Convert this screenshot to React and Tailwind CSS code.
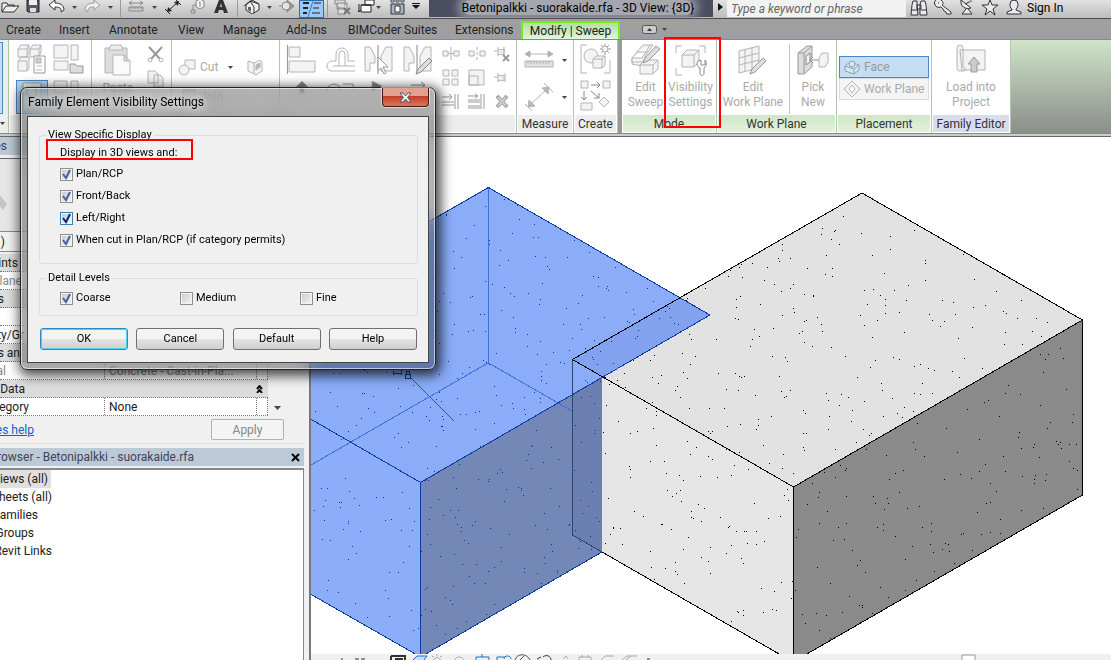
import React, { useState } from "react";

const seeded = (seed) => () => {
  seed = (seed * 16807) % 2147483647;
  return seed / 2147483647;
};

/* Concrete stipple: one pixel marks scattered over the whole scene */
const stipple = (seed, count) => {
  const rand = seeded(seed);
  let d = "";
  for (let i = 0; i < count; i++) {
    const x = 311 + Math.floor(rand() * 775);
    const y = 185 + Math.floor(rand() * 470);
    d += `M${x} ${y}h1v1h-1z`;
  }
  return d;
};

const Art = ({ w, h, className = "", children }) => (
  <svg
    width={w}
    height={h}
    viewBox={`0 0 ${w} ${h}`}
    fill="#f3f3f3"
    stroke="#b4b4b4"
    strokeLinejoin="round"
    className={`shrink-0 ${className}`}
    aria-hidden="true"
  >
    {children}
  </svg>
);

const Caret = ({ className = "" }) => (
  <svg width="5" height="3" viewBox="0 0 5 3" className={`shrink-0 ${className}`} aria-hidden="true">
    <path d="M0 0h5L2.500 3z" fill="#444" />
  </svg>
);

const quickTools = [
  {
    name: "Open",
    width: "w-[20px]",
    art: <path d="M1 12V3h5l1 2h6v2M1 12l4-6h13l-5 6z" fill="#eee" stroke="#333" />,
  },
  {
    name: "Save",
    width: "w-[26px]",
    art: (
      <>
        <path d="M3 0h12v12H4l-1-1z" fill="#555b66" stroke="#222" />
        <path d="M5 0h8v5H5z" fill="#eee" stroke="none" />
        <path d="M6 8h6v4H6z" fill="#ddd" stroke="none" />
      </>
    ),
  },
  {
    name: "Undo",
    width: "w-[22px]",
    art: <path d="M1 5l6-5v3c5 0 9 2 9 7l-3 2c1-4-2-5-6-5v3z" fill="#fff" stroke="#333" />,
  },
  { name: "Undo list", width: "w-[12px]" },
  {
    name: "Redo",
    width: "w-[24px]",
    art: <path d="M17 5l-6-5v3c-5 0-9 2-9 7l3 2c-1-4 2-5 6-5v3z" fill="#eee" stroke="#999" />,
  },
  { name: "Redo list", width: "w-[12px]" },
  { sep: true, width: "w-[8px]" },
  {
    name: "Measure",
    width: "w-[24px]",
    art: (
      <>
        <path d="M2 3h14M5 1L2 3l3 2M13 1l3 2-3 2" fill="none" stroke="#888" />
        <path d="M2 7h14v4H2zM5 7v2M8 7v2M11 7v2M14 7v2" stroke="#888" fill="#ccc" />
      </>
    ),
  },
  { name: "Measure list", width: "w-[12px]" },
  {
    name: "Aligned dimension",
    width: "w-[25px]",
    art: (
      <>
        <path d="M4 11L14 2M1 9l5 5M12 0l5 5" fill="none" stroke="#222" />
        <path d="M3 12l1-5 4 4zM15 1l-1 5-4-4z" fill="#222" stroke="none" />
      </>
    ),
  },
  {
    name: "Tag",
    width: "w-[24px]",
    art: (
      <>
        <path d="M8 1l4-2 4 2v6l-4 2-4-2z" fill="#eee" stroke="#888" />
        <path d="M8 5H5v5M3 10h4v3H3zM12 2v5M11 3l1-1" fill="none" stroke="#888" />
      </>
    ),
  },
  {
    name: "Text",
    width: "w-[24px]",
    art: <path d="M2 13L7 0h4l5 13h-4l-1-3H7l-1 3zM8 7h2L9 3z" fill="#333" stroke="none" />,
  },
  { sep: true, width: "w-[8px]" },
  {
    name: "Default 3D view",
    width: "w-[22px]",
    art: (
      <>
        <path d="M3 5l6-5 7 4v6l-7 4-6-4z" fill="#eee" stroke="#333" />
        <path d="M1 6l6-5 9 3M7 1l4 6v6" fill="none" stroke="#333" />
        <path d="M5 7h3v5l-3-2z" fill="#5b6470" stroke="none" />
      </>
    ),
  },
  { name: "View list", width: "w-[12px]" },
  {
    name: "Section",
    width: "w-[24px]",
    art: (
      <>
        <path d="M9 0l7 6-7 6z" fill="#999" stroke="#888" />
        <circle cx="8" cy="6" r="4" fill="#e4e4e4" stroke="#888" />
        <path d="M1 6h3" stroke="#888" />
      </>
    ),
  },
];

const QuickButton = ({ tool }) =>
  tool.sep ? (
    <span className={`${tool.width} flex h-[17px] shrink-0 justify-center`}>
      <span className="w-px bg-[#9a9a9a]" />
    </span>
  ) : (
    <button aria-label={tool.name} className={`${tool.width} flex h-[17px] shrink-0 items-start justify-center`}>
      {tool.art ? (
        <Art w={18} h={14}>
          {tool.art}
        </Art>
      ) : (
        <Caret className="mt-[6px]" />
      )}
    </button>
  );

const TopBar = () => (
  <header className="flex h-[19px] shrink-0 items-start overflow-hidden border-b border-[#4d4d4d] bg-linear-to-b from-[#e2e2e2] to-[#bcbcbc] text-[12px]">
    {quickTools.map((tool, i) => (
      <QuickButton key={i} tool={tool} />
    ))}
    <button aria-label="Thin lines" className="h-[18px] w-[25px] shrink-0 border border-[#2a6ebb] bg-[#9cc8f5]">
      <Art w={23} h={16}>
        <path d="M3 2h6M3 7h5M3 12h4" stroke="#222" strokeWidth="2" />
        <path d="M14 2h7M13 7h6M12 12h8" stroke="#222" />
        <path d="M13 0L8 16" stroke="#2a7de0" />
      </Art>
    </button>
    <span className="ml-[3px] h-[17px] w-px shrink-0 bg-[#9a9a9a]" />
    <button aria-label="Close hidden windows" className="ml-[6px] shrink-0">
      <Art w={20} h={16}>
        <path d="M1 0h10v6M4 4H1V0M3 3h10v6H3zM5 7H3M6 8h5v6H4V8z" fill="#ddd" stroke="#888" />
        <path d="M10 8l6 6M16 8l-6 6" stroke="#777" strokeWidth="2" />
      </Art>
    </button>
    <button aria-label="Switch windows" className="ml-[4px] flex w-[30px] shrink-0 items-start">
      <Art w={18} h={15}>
        <path d="M7 0h9v5H7zM3 5h10v7H3z" fill="#fff" stroke="#222" />
        <path d="M3 5h10M1 4v8M0 10l1 2 2-2" stroke="#222" fill="none" />
      </Art>
      <Caret className="mt-[6px]" />
    </button>
    <button aria-label="User interface" className="shrink-0">
      <Art w={18} h={16}>
        <path d="M3 0h3v2H3zM8 0h3v2H8zM13 0h3v2h-3z" fill="#fff" stroke="#444" />
        <path d="M3 4h13v10H3z" fill="#a8b4c4" stroke="#333" />
        <path d="M7 6h5v6H7z" fill="#fff" stroke="#333" />
      </Art>
    </button>
    <button aria-label="Customize toolbar" className="ml-[6px] w-[17px] shrink-0">
      <svg width="8" height="9" viewBox="0 0 8 9" aria-hidden="true">
        <path d="M0 3h8v1H0zM0 5h8L4 9z" fill="#111" />
      </svg>
    </button>
    <div className="h-[17px] w-[284px] shrink-0 bg-[#4b4d60] pr-[20px] pl-[34px]">
      <div className="flex h-[15px] items-center justify-center rounded-full bg-[#a5a6b0] whitespace-nowrap text-black shadow-[0_0_8px_6px_#8d8e9b]">
        Betonipalkki - suorakaide.rfa - 3D View: {"{3D}"}
      </div>
    </div>
    <button aria-label="Expand search" className="flex h-[17px] w-[14px] shrink-0 items-start justify-center pt-[3px]">
      <svg width="5" height="8" viewBox="0 0 5 8" aria-hidden="true">
        <path d="M0 0l5 4-5 4z" fill="#111" />
      </svg>
    </button>
    <input
      aria-label="Search"
      placeholder="Type a keyword or phrase"
      className="h-[17px] w-[179px] shrink-0 bg-[#f2f2f2] pl-[4px] text-[12px] italic outline-none placeholder:text-[#666]"
    />
    <button aria-label="Find" className="ml-[4px] shrink-0">
      <Art w={20} h={16}>
        <path d="M3 1h4v4l1 10H1L2 5zM11 1h4l1 4 1 10h-7V5zM7 5h4v4H7z" fill="#e8ebf2" stroke="#333" />
        <path d="M2 10h5M11 10h5" stroke="#333" />
      </Art>
    </button>
    <button aria-label="Subscription" className="ml-[3px] shrink-0">
      <Art w={22} h={16}>
        <path d="M2 5a4 4 0 0 1 7-4c2 2 1 3 0 4l9 7v2h-4l-1-2-2-1-1-2-2-2c-3 1-5 0-6-2zM5 3h1" fill="#e8ebf2" stroke="#333" />
      </Art>
    </button>
    <button aria-label="Communication" className="ml-[3px] shrink-0">
      <Art w={20} h={16}>
        <path d="M3 0c-1 6 4 10 10 8zM7 4l6-3M8 9l-4 5h10l-4-5" fill="#e8ebf2" stroke="#333" />
        <circle cx="13" cy="1" r="1" fill="#333" />
      </Art>
    </button>
    <button aria-label="Favorites" className="ml-[2px] shrink-0">
      <Art w={20} h={16}>
        <path d="M10 0l2 5h6l-5 4 2 6-5-4-5 4 2-6-5-4h6z" fill="#e8ebf2" stroke="#333" />
      </Art>
    </button>
    <button className="ml-[4px] flex shrink-0 items-start whitespace-nowrap text-black">
      <Art w={20} h={16}>
        <path d="M6 4a4 4 0 0 1 8 0c0 3-1 4-2 5v1l5 2v2H3v-2l5-2V9C6 8 6 6 6 4z" fill="#e8ebf2" stroke="#333" />
      </Art>
      <span className="ml-[3px] leading-[16px]">Sign In</span>
    </button>
  </header>
);

const tabs = [
  ["Create", "w-[53px]"],
  ["Insert", "w-[50px]"],
  ["Annotate", "w-[69px]"],
  ["View", "w-[45px]"],
  ["Manage", "w-[63px]"],
  ["Add-Ins", "w-[62px]"],
  ["BIMCoder Suites", "w-[107px]"],
  ["Extensions", "w-[66px]"],
];

const TabRow = () => (
  <nav className="flex h-[20px] shrink-0 items-end bg-[#9f9f9f] pl-[6px] text-[12px] leading-[18px] text-[#222]">
    {tabs.map(([label, width]) => (
      <button key={label} className={`${width} shrink-0 text-left whitespace-nowrap`}>
        {label}
      </button>
    ))}
    <button className="h-[18px] w-[99px] shrink-0 border-2 border-b-0 border-[#70f020] bg-linear-to-b from-[#b4dca4] to-[#e2f6dc] leading-[14px] whitespace-nowrap text-[#222]">
      Modify | Sweep
    </button>
    <button aria-label="Minimize ribbon" className="mb-[5px] ml-[22px] flex shrink-0 items-center gap-[5px]">
      <svg width="15" height="9" viewBox="0 0 15 9" aria-hidden="true">
        <rect x="0.500" y="0.500" width="14" height="8" rx="2" fill="#ccc" stroke="#555" />
        <path d="M5 6l2.500-3L10 6z" fill="#333" />
      </svg>
      <Caret />
    </button>
  </nav>
);

const Panel = ({ title, width, tone = "bg-[#ededed]", children }) => (
  <section className={`${width} flex shrink-0 flex-col border-r border-[#b3c7ac] bg-white`}>
    <div className="flex flex-1 justify-center pt-[4px]">{children}</div>
    <h2 className={`${tone} mx-px mb-px flex h-[17px] items-center justify-center text-[12px] whitespace-nowrap text-[#333]`}>
      {title}
    </h2>
  </section>
);

const BigTool = ({ width, lines, children }) => (
  <button className={`${width} flex shrink-0 flex-col items-center text-[12px] leading-[15px] whitespace-nowrap text-[#aaa]`}>
    {children}
    <span className="mt-[4px]">{lines[0]}</span>
    <span>{lines[1]}</span>
  </button>
);

const greenTone = "bg-linear-to-b from-[#cfe4c8] to-[#e2f5dc]";

const Ribbon = () => (
  <div className="flex h-[95px] shrink-0 border-y border-[#58b818] bg-linear-to-b from-[#cfe5c8] to-[#8b8f8a]">
    <section className="w-[9px] shrink-0 border-r border-[#a9c79d] bg-[#ededed]">
      <div className="mt-[2px] h-[72px] w-[3px] border border-l-0 border-[#4a86c5] bg-[#c5dff5]" />
      <Caret className="mt-[8px]" />
    </section>

    <Panel width="w-[83px]" title="">
      <div className="grid grid-cols-2 gap-x-[5px] gap-y-[4px]">
        <Art w={32} h={30}>
          <path d="M2 5l3-4h8v7l-2 5H2zM2 5h9v8M11 5l2-4M14 5l3-4h8v7l-2 5h-9zM14 5h9v8M23 5l2-4M2 17l3-4h8v11l-2 3H2zM2 17h9v10" />
          <path d="M18 12h11v17H18z" fill="#fff" stroke="#999" />
          <path d="M20 14h5v5h-5z" fill="#ccc" />
          <path d="M21 22h5M20 26h6" />
        </Art>
        <Art w={32} h={30}>
          <path d="M1 1h14v13H1zM18 1h7v15h-7zM1 17h14v9H1z" />
          <path d="M17 20h5l2 2h6v7H17z" fill="#ddd" stroke="#999" />
        </Art>
        <div className="h-[34px] border border-[#4a86c5] bg-[#b8d8f5] p-px">
          <Art w={28} h={30}>
            <path d="M5 1h18v28H5zM9 6h9v8H9z" stroke="#8aa" />
          </Art>
        </div>
        <Art w={32} h={30}>
          <path d="M1 1h13v12H1zM18 1h7v15h-7z" />
        </Art>
      </div>
    </Panel>

    <Panel width="w-[80px]" title="">
      <div className="ml-[4px] w-[40px] text-[12px] leading-[16px] text-[#aaa]">
        <Art w={28} h={32}>
          <path d="M2 4h22v25H2z" fill="#ddd" />
          <path d="M8 1h10l2 5H6z" fill="#eee" />
          <path d="M10 11h11l6 6v14H10zM21 11v6h6" fill="#fafafa" />
        </Art>
        <span className="block pt-[4px]">Paste</span>
      </div>
      <div className="ml-[4px] flex flex-col gap-[6px] pt-[2px]">
        <Art w={18} h={18}>
          <path d="M2 1l11 12M15 1L4 13" stroke="#999" strokeWidth="2" />
          <circle cx="3" cy="14" r="2" fill="none" />
          <circle cx="14" cy="14" r="2" fill="none" />
        </Art>
        <Art w={18} h={18}>
          <path d="M1 1h7l3 3v9H1zM7 5h6l3 3v9H7z" />
        </Art>
      </div>
    </Panel>

    <Panel width="w-[108px]" title="">
      <div className="flex flex-col gap-[12px] pt-[14px] pr-[10px]">
        <div className="flex items-center text-[12px] text-[#aaa]">
          <Art w={18} h={18}>
            <path d="M7 2h10v9H7z" />
            <circle cx="6" cy="12" r="5" />
          </Art>
          <span className="ml-[4px] w-[28px]">Cut</span>
          <Caret />
          <Art w={16} h={18} className="ml-[14px]">
            <path d="M1 3l6 2 6-3 2 2v9l-6 4-8-4zM7 5v11" />
            <path d="M9 7l4-2v4l-4 3z" fill="#bbb" />
          </Art>
        </div>
        <div className="flex items-center text-[12px] text-[#aaa]">
          <Art w={18} h={18}>
            <path d="M5 2h12v9H5z" />
          </Art>
          <span className="ml-[4px]">Join</span>
        </div>
      </div>
    </Panel>

    <Panel width="w-[237px]" title="">
      <div className="flex flex-1 justify-end gap-[8px] pt-px pr-[4px]">
        <div className="flex flex-1 flex-col gap-[6px] pl-[6px]">
          <div className="flex gap-[8px]">
            <Art w={31} h={30}>
              <path d="M1.500 0v29" stroke="#999" />
              <path d="M3 2h11v10H3zM3 16h26v11H3z" />
            </Art>
            <Art w={31} h={30}>
              <path d="M30 26H7a5 5 0 0 1 0-10h4V9a6 6 0 0 1 12 0v7h7M30 21H8M14 21V9a3 3 0 0 1 6 0v12" fill="none" />
            </Art>
            <Art w={31} h={30}>
              <path d="M1 2h5l5 9v7H6v8H1zM28 2h-6l-5 9v15h11z" />
              <path d="M14 0v29" stroke="#888" />
              <path d="M14 12v14l3-3 3 6 2-1-3-6h5z" fill="#fff" stroke="#999" />
            </Art>
            <Art w={31} h={30}>
              <path d="M1 2h5l5 9v7H6v8H1zM28 2h-6l-5 9v15h11z" />
              <path d="M14 0v29" stroke="#888" />
              <path d="M26 13l3 3-11 11-5 2 2-5z" fill="#ddd" stroke="#888" />
            </Art>
          </div>
          <div className="flex gap-[8px]">
            <Art w={31} h={24}>
              <path d="M16 0l6 6h-4v6h-4V6h-4z" fill="#888" />
            </Art>
            <Art w={31} h={24}>
              <path d="M2 10a7 7 0 0 1 14 0M18 3h10v6" fill="none" stroke="#999" />
            </Art>
            <Art w={31} h={24}>
              <path d="M8 0l10 5-10 5z" fill="#888" />
            </Art>
            <Art w={31} h={24}>
              <path d="M8 4h14M18 1l4 3-4 3" stroke="#888" fill="none" />
            </Art>
          </div>
        </div>
        <div className="grid grid-cols-[18px_18px_18px] content-start gap-x-[8px] gap-y-[6px]">
          <Art w={18} h={18}>
            <path d="M1 6h5v5H1zM12 6h5v5h-5zM6 8.500h6M9 2v13" />
          </Art>
          <Art w={18} h={18}>
            <path d="M1 6h5v5H1zM12 6h5v5h-5zM9 2v3M9 7v3M9 12v3" />
          </Art>
          <Art w={18} h={18}>
            <path d="M0 6h4M4 2v9M4 4c2 1 4 1 6 0v6c-2-1-4-1-6 0M10 2v9" />
            <path d="M9 10l6 6M15 10l-6 6" stroke="#999" strokeWidth="2" />
          </Art>
          <Art w={18} h={18}>
            <path d="M1 1h6v6H1zM10 1h6v6h-6zM1 10h6v6H1zM10 10h6v6h-6z" />
          </Art>
          <Art w={18} h={18}>
            <path d="M1 1h15v15H1zM1 7h9v9H1z" />
          </Art>
          <Art w={18} h={18}>
            <path d="M0 8h4M4 4v9M4 6c2 1 4 1 6 0v6c-2-1-4-1-6 0M11 4v9" />
          </Art>
          <Art w={18} h={18}>
            <path d="M0 4h10M7 1l3 3-3 3M0 9h12M0 12h12M13 1v15M16 1v15" fill="none" stroke="#999" />
          </Art>
          <Art w={18} h={18}>
            <path d="M0 3h9M7 1l3 2-3 2M0 7h12M0 9h12M0 13h12M0 15h12M13 1v15M16 1v15" fill="none" stroke="#999" />
          </Art>
          <Art w={18} h={18}>
            <path d="M3 3l10 11M13 3L3 14" stroke="#a0a0a0" strokeWidth="4" />
            <path d="M4 4l8 9M12 4l-8 9" stroke="#ccc" strokeWidth="2" />
          </Art>
        </div>
      </div>
    </Panel>

    <Panel width="w-[57px]" title="Measure">
      <div className="flex flex-col gap-[8px] pt-[2px]">
        <div className="flex items-center gap-[8px]">
          <Art w={30} h={28}>
            <path d="M2 8h27M6 5L1 8l5 3zM24 5l5 3-5 3z" fill="#aaa" />
            <path d="M1 15h28v6H1zM4 15v3M7 15v3M10 15v3M13 15v3M16 15v3M19 15v3M22 15v3M25 15v3" fill="#e0e0e0" />
          </Art>
          <Caret />
        </div>
        <div className="flex items-center gap-[8px]">
          <Art w={30} h={30}>
            <path d="M4 25L25 5M1 22l7 7M20 1l9 9M5 18l-1 7 7-1zM25 5l-7 1 6 6z" fill="#bbb" />
          </Art>
          <Caret />
        </div>
      </div>
    </Panel>

    <Panel width="w-[44px]" title="Create">
      <div className="flex flex-col gap-[5px]">
        <Art w={32} h={31}>
          <path d="M7 1H1v28h6M24 29h6V16" fill="none" />
          <circle cx="11" cy="12" r="7" />
          <path d="M13 15l3-3h9v9l-3 3h-9zM13 15h9v9M22 15l3-3" />
          <path d="M25 0v11M20 5h11M21 1l8 8M29 1l-8 8" stroke="#999" />
          <circle cx="25" cy="5" r="3" />
        </Art>
        <Art w={32} h={32}>
          <path d="M1 1h7v7H1zM23 1h7v7h-7zM1 23h11v7H1zM24 17l5 5-5 5-5-5z" />
          <path d="M11 5h9M17 2l3 3-3 3M4 11v9M1 17l3 3 3-3M11 11l8 7M19 13v5h-5" fill="none" stroke="#888" />
        </Art>
      </div>
    </Panel>

    <div className="w-[4px] shrink-0 bg-[#999]" />

    <Panel width="w-[95px]" title="Mode" tone={greenTone}>
      <BigTool width="w-[43px]" lines={["Edit", "Sweep"]}>
        <Art w={34} h={32}>
          <path d="M3 14L14 1h10l-7 10-3 7H3zM3 14h10l8-13M7 8h12M3 14v6l10 2" />
          <path d="M11 21l4-5h14v9l-5 5H11zM11 21h13v9M24 21l5-5" />
          <path d="M27 2l4 3-12 12-5 2 2-5z" fill="#ddd" stroke="#999" />
        </Art>
      </BigTool>
      <div className="relative">
        <BigTool width="w-[47px]" lines={["Visibility", "Settings"]}>
          <Art w={34} h={32}>
            <path d="M8 2H2v7M25 2h6v7M2 24v7h6" fill="none" />
            <path d="M8 11l5-5h12v12l-5 5H8zM8 11h12v12M20 11l5-5" />
            <path d="M24 17c-2 3-1 5 2 7v6c1 2 3 2 4 0v-6c3-2 3-5 1-8v5h-4v-5z" fill="#fff" stroke="#888" />
          </Art>
        </BigTool>
        <div className="pointer-events-none absolute -top-[7px] -left-[3px] z-20 h-[91px] w-[57px] border-2 border-[#f00]" />
      </div>
    </Panel>

    <Panel width="w-[120px]" title="Work Plane" tone={greenTone}>
      <BigTool width="w-[72px]" lines={["Edit", "Work Plane"]}>
        <Art w={34} h={32}>
          <path d="M3 7l20-5v22L3 29zM9 5v22M16 3v22M3 14l20-5M3 21l20-5" />
          <path d="M27 14l3 3-11 11-5 2 2-5z" fill="#ddd" stroke="#999" />
        </Art>
      </BigTool>
      <span className="mb-px w-px bg-[#c4c4c4]" />
      <BigTool width="w-[46px]" lines={["Pick", "New"]}>
        <Art w={34} h={32}>
          <path d="M2 9l9-7h5v21l-8 7H2zM2 9h6v21M8 9l8-7" fill="#ddd" stroke="#999" />
          <path d="M10 12l4-3v9l-4 3zM14 16h9M17 13l-3 3 3 3" stroke="#888" />
          <path d="M23 14l3-5h6v9l-3 5h-6z" />
        </Art>
      </BigTool>
    </Panel>

    <Panel width="w-[95px]" title="Placement" tone={greenTone}>
      <div className="w-[90px] pt-[12px] text-[12px] text-[#aaa]">
        <button className="flex h-[22px] w-full items-center border border-[#4a86c5] bg-[#c5def5] pl-[4px] whitespace-nowrap text-[#999]">
          <Art w={16} h={16}>
            <path d="M1 7l5-4 9 3v5l-5 4-9-3zM1 7l9 3v5M10 10l5-4" fill="#d5e5f2" stroke="#8ba2b5" />
            <circle cx="8" cy="5" r="3" fill="#d5e5f2" stroke="#8ba2b5" />
          </Art>
          <span className="ml-[4px]">Face</span>
        </button>
        <button className="flex h-[22px] w-full items-center border border-[#ddd] bg-[#f4f4f4] pl-[4px] whitespace-nowrap">
          <Art w={16} h={16}>
            <path d="M8 0l8 8-8 8-8-8z" />
            <path d="M8 4l3 4-3 4-3-4z" fill="#fff" />
          </Art>
          <span className="ml-[4px]">Work Plane</span>
        </button>
      </div>
    </Panel>

    <Panel width="w-[79px]" title="Family Editor" tone="bg-[#d9dcee]">
      <BigTool width="w-[76px]" lines={["Load into", "Project"]}>
        <Art w={34} h={32}>
          <path d="M6 6h25v20H8zM3 4a3 3 0 0 1 6 0v19c3 0 3 4 0 4H5c-2-1-2-3-2-5z" />
          <path d="M20 13l6 7h-3v8h-6v-8h-3z" fill="#ccc" stroke="#999" />
        </Art>
      </BigTool>
    </Panel>
  </div>
);

const propertyRows = [
  { label: "Constraints", width: "w-[18px]", head: true },
  { label: "Work Plane", width: "w-[22px]", muted: true },
  { label: "Graphics", width: "w-[4px]", head: true },
  { label: "", width: "w-[4px]" },
  { label: "Visibility/Gr", width: "w-[24px]" },
  { label: "Materials an", width: "w-[20px]", head: true },
  { label: "Material", width: "w-[6px]", value: "Concrete - Cast-in-Pla...", muted: true },
  { label: "Identity Data", width: "w-[25px]", head: true },
  { label: "Subcategory", width: "w-[29px]", value: "None" },
];

const Clip = ({ width, children }) => (
  <span className={`${width} flex shrink-0 justify-end overflow-hidden whitespace-nowrap`}>{children}</span>
);

const SidePanel = () => (
  <aside className="flex w-[309px] shrink-0 flex-col bg-[#f0f0f0] pr-[5px] text-[12px] text-[#222]">
    <div className="flex h-[18px] items-center bg-[#bccad6] text-[#445]">
      <Clip width="w-[7px]">Properties</Clip>
    </div>
    <div className="mt-[3px] h-[73px] border-t border-[#666] bg-[#e6e6e6]">
      <Art w={12} h={70}>
        <path d="M0 36l7 9-4 6-3-4z" fill="#c4c4c4" stroke="none" />
      </Art>
    </div>
    <div className="flex h-[21px] items-center border-y border-[#888]">
      <Clip width="w-[5px]">Structural Framing (1)</Clip>
    </div>
    <div className="mt-[2px] flex">
      <div className="w-[268px] shrink-0">
        {propertyRows.map((row) => (
          <div
            key={row.label}
            className={`flex h-[18px] items-center border-b border-dotted border-[#777] ${row.head ? "bg-[#dcdcdc]" : "bg-white"} ${row.muted ? "text-[#888]" : "text-[#222]"}`}
          >
            <div className="w-[104px] shrink-0">
              <Clip width={row.width}>{row.label}</Clip>
            </div>
            {row.head ? (
              <span className="flex flex-1 justify-end pr-[5px]">
                <svg width="7" height="8" viewBox="0 0 7 8" fill="none" stroke="#111" strokeWidth="2" aria-hidden="true">
                  <path d="M1 4l2.500-3L6 4M1 8l2.500-3L6 8" />
                </svg>
              </span>
            ) : (
              <>
                <span className="flex h-full flex-1 items-center border-x border-dotted border-[#777] pl-[4px]">{row.value}</span>
                <span className="h-full w-[11px] border-r border-dotted border-[#777]" />
              </>
            )}
          </div>
        ))}
      </div>
      <div className="flex w-[18px] flex-col items-center justify-end pb-[6px]">
        <svg width="7" height="4" viewBox="0 0 7 4" aria-hidden="true">
          <path d="M0 0h7L3.500 4z" fill="#444" />
        </svg>
      </div>
    </div>
    <div className="flex h-[28px] shrink-0 items-center justify-between border-b border-[#ddd] pr-[20px]">
      <a href="#help" className="text-[#0a62c4] underline">
        <Clip width="w-[34px]">Properties help</Clip>
      </a>
      <button disabled className="h-[21px] w-[73px] rounded-xs border border-[#adb2b5] bg-[#f4f4f4] text-[#888]">
        Apply
      </button>
    </div>
    <div className="mt-[4px] flex h-[18px] shrink-0 items-center justify-between bg-[#bccad8] pr-[4px] text-[#445]">
      <Clip width="w-[194px]">Project Browser - Betonipalkki - suorakaide.rfa</Clip>
      <button aria-label="Close browser">
        <svg width="9" height="9" viewBox="0 0 9 9" stroke="#000" strokeWidth="2" aria-hidden="true">
          <path d="M1 1l7 7M8 1L1 8" />
        </svg>
      </button>
    </div>
    <ul className="mt-[2px] flex-1 border-t-2 border-r border-[#888] bg-white leading-[18px]">
      <li className="w-[51px] bg-[#e0e0e0]">
        <Clip width="w-[48px]">Views (all)</Clip>
      </li>
      <li>
        <Clip width="w-[52px]">Sheets (all)</Clip>
      </li>
      <li>
        <Clip width="w-[38px]">Families</Clip>
      </li>
      <li>
        <Clip width="w-[34px]">Groups</Clip>
      </li>
      <li>
        <Clip width="w-[52px]">Revit Links</Clip>
      </li>
    </ul>
  </aside>
);

const blueFaces = "488,187 710,315 602,377 602,552 420,657 198,530 198,354";
const greyFaces = "862,193 1083,320 1083,495 793,662 602,552 602,377 710,315 680,298";

const Scene = () => (
  <svg
    viewBox="311 137 800 517"
    preserveAspectRatio="xMinYMin slice"
    shapeRendering="crispEdges"
    className="min-h-0 w-full flex-1"
    role="img"
    aria-label="3D view of two concrete beams"
  >
    <defs>
      <clipPath id="blue">
        <polygon points={blueFaces} />
      </clipPath>
      <clipPath id="grey">
        <polygon points={greyFaces} />
      </clipPath>
    </defs>
    <polygon points="862,193 1083,320 793,487 572,359" fill="#e1e1e1" />
    <polygon points="572,359 793,487 793,662 572,535" fill="#e5e5e5" />
    <polygon points="1083,320 1083,495 793,662 793,487" fill="#8a8a8a" />
    <polygon points="488,187 710,315 420,482 198,354" fill="#8aacf9" />
    <polygon points="680,298 710,315 602,377 572,359" fill="#82a2ef" />
    <polygon points="198,354 420,482 420,657 198,530" fill="#8cadfa" />
    <polygon points="420,482 602,377 602,552 420,657" fill="#7488b8" />
    <polygon points="572,394 602,377 602,552 572,535" fill="#6b80b0" />
    <path d={stipple(4711, 1250)} fill="#0033a8" clipPath="url(#blue)" />
    <path d={stipple(977, 1150)} fill="#000" clipPath="url(#grey)" />
    <g fill="none" stroke="#3f70e0">
      <path d="M488.500 187V363L572 411M488 363L311 465" />
    </g>
    <g fill="none" stroke="#0b3aa8">
      <path d="M198 354L488.500 187.500 710 315 420.500 482.500 198 354M420.500 482V657M198 530L420.500 657 602 552" />
    </g>
    <path d="M572.500 359V535L602 552" fill="none" stroke="#2f4474" />
    <g fill="none" stroke="#000">
      <path d="M862 193L1082.500 320 793.500 487 572.500 359.500 862 193M793.500 487V662M1082.500 320V495L793 662M602 552L793 662" />
    </g>
    <path d="M410 377l44 44" stroke="#555" fill="none" />
    <path d="M393 371v4M393 373h9M401 370v5M405.500 374.500h5v4h-5zM406.500 374v-3h3v3" stroke="#0b3aa8" fill="none" />
  </svg>
);

const StatusBar = () => (
  <footer className="flex h-[6px] shrink-0 items-start overflow-hidden bg-[#f0f0f0]">
    <svg width="800" height="6" viewBox="0 0 800 6" fill="none" aria-hidden="true">
      <path d="M30 5h2M44 5h4M50 5h4" stroke="#333" />
      <path d="M80 2h14v4M80 2v4M84 5h8" stroke="#333" strokeWidth="2" />
      <path d="M102 6l4-4h10l-3 4" fill="#bfe3fa" stroke="#1a6fc0" />
      <path d="M122 6l4-3 4 3M126 0v2M121 2l2 1M131 2l-2 1M144 6c1-4 7-4 9 0" stroke="#aaa" />
      <path d="M165 6V3h13v3M171 0v3M186 6V3h8M193 5c0-4 7-4 7 0" stroke="#1a6fc0" />
      <path d="M204 6c2-7 12-7 15 0M209 6l4-4" stroke="#555" />
      <path d="M226 5l4-2M232 3c3-3 8-1 8 3" stroke="#333" />
      <path d="M252 5l3-3 2 3M268 6V3h12v3M271 1v3M277 1v3M290 6l4-4h9M311 6l5-4h10M315 6l5-4" stroke="#aaa" />
      <path d="M336 5h3" stroke="#333" />
      <path d="M651 6V1h13v5" fill="#fff" stroke="#999" />
    </svg>
  </footer>
);

const CheckField = ({ label, checked, onChange, hot = false }) => (
  <label className="flex h-[22px] items-center gap-[3px] whitespace-nowrap">
    <span className="relative flex h-[13px] w-[13px]">
      <input
        type="checkbox"
        checked={checked}
        onChange={onChange}
        className={`peer h-[13px] w-[13px] appearance-none border bg-linear-to-br from-[#c4c9d2] to-[#f6f6f6] shadow-[inset_0_0_0_1px_#f4f4f4] ${hot ? "border-[#3c7fb1]" : "border-[#8e8f8f]"}`}
      />
      <svg
        width="13"
        height="13"
        viewBox="0 0 13 13"
        fill="none"
        stroke={hot ? "#0c2a72" : "#4b5f9c"}
        strokeWidth="2"
        className="pointer-events-none absolute inset-0 hidden peer-checked:block"
        aria-hidden="true"
      >
        <path d="M3 6l3 4 4-8" />
      </svg>
    </span>
    {label}
  </label>
);

const buttonBase =
  "h-[22px] w-[88px] rounded-[3px] border bg-linear-to-b from-[#f3f3f3] from-50% via-[#e4e4e4] via-50% to-[#cfcfcf]";

const VisibilityDialog = () => {
  const [state, setState] = useState({
    plan: true,
    front: true,
    left: true,
    cut: true,
    coarse: true,
    medium: false,
    fine: false,
  });

  const bind = (key) => ({
    checked: state[key],
    onChange: () => setState({ ...state, [key]: !state[key] }),
  });

  return (
    <div
      role="dialog"
      aria-labelledby="dialog-title"
      className="absolute top-[87px] left-[20px] z-10 w-[416px] rounded-[7px] border border-[#222] bg-black/30 px-[6px] pb-[6px] text-black shadow-[2px_3px_12px_3px_rgba(0,0,0,0.7),inset_0_0_0_1px_rgba(255,255,255,0.6)] backdrop-blur-md"
    >
      <div className="flex h-[28px] items-start justify-between">
        <h1
          id="dialog-title"
          className="pl-px text-[12px] leading-[28px] whitespace-nowrap [text-shadow:0_0_8px_#fff,0_0_12px_#fff]"
        >
          Family Element Visibility Settings
        </h1>
        <button
          aria-label="Close"
          className="flex h-[19px] w-[47px] items-center justify-center rounded-b-[4px] border border-t-0 border-[#4b1710] bg-linear-to-b from-[#e2a090] from-45% via-[#c03c24] via-45% to-[#d8765c] shadow-[0_0_0_1px_rgba(255,255,255,0.5)]"
        >
          <svg width="13" height="11" viewBox="0 0 13 11" aria-hidden="true">
            <path d="M1 1h3l2.500 3L9 1h3L8.500 5.500 12 10H9L6.500 7 4 10H1l3.500-4.500z" fill="#fff" stroke="#4d5468" />
          </svg>
        </button>
      </div>

      <div className="border border-[#444] bg-[#f0f0f0] pt-[10px] pr-[10px] pb-[12px] pl-[11px] text-[11px]">
        <fieldset className="h-[137px] rounded-[3px] border border-[#d5dfe5] pl-[20px]">
          <legend className="-ml-[14px] px-[2px] leading-[16px]">View Specific Display</legend>
          <div className="relative -mt-[4px]">
            <p className="mr-[2px] bg-[#f0f0f0] pt-[4px] leading-[20px]">Display in 3D views and:</p>
            <div className="pointer-events-none absolute top-0 -left-[14px] h-[21px] w-[147px] border-2 border-[#f00]" />
          </div>
          <CheckField label="Plan/RCP" {...bind("plan")} />
          <CheckField label="Front/Back" {...bind("front")} />
          <CheckField label="Left/Right" hot {...bind("left")} />
          <CheckField label="When cut in Plan/RCP (if category permits)" {...bind("cut")} />
        </fieldset>

        <fieldset className="mt-[6px] h-[46px] rounded-[3px] border border-[#d5dfe5] pl-[20px]">
          <legend className="-ml-[14px] px-[2px] leading-[16px]">Detail Levels</legend>
          <div className="grid grid-cols-[120px_120px_1fr] pt-px">
            <CheckField label="Coarse" {...bind("coarse")} />
            <CheckField label="Medium" {...bind("medium")} />
            <CheckField label="Fine" {...bind("fine")} />
          </div>
        </fieldset>

        <div className="mt-[12px] flex justify-between px-px">
          <button className={`${buttonBase} border-[#2c8ec0] shadow-[inset_0_0_0_1px_#4fd0f5]`}>OK</button>
          <button className={`${buttonBase} border-[#707070]`}>Cancel</button>
          <button className={`${buttonBase} border-[#707070]`}>Default</button>
          <button className={`${buttonBase} border-[#707070]`}>Help</button>
        </div>
      </div>
    </div>
  );
};

const App = () => (
  <div className="relative flex h-screen flex-col overflow-hidden bg-[#f0f0f0] font-[Roboto,sans-serif]">
    <TopBar />
    <TabRow />
    <Ribbon />
    <div className="h-[3px] shrink-0 border-b border-[#666] bg-[#ccc]" />
    <div className="flex min-h-0 flex-1">
      <SidePanel />
      <main className="flex min-w-0 flex-1 flex-col border-l-2 border-[#777] bg-white">
        <Scene />
        <StatusBar />
      </main>
    </div>
    <VisibilityDialog />
  </div>
);

export default App;
